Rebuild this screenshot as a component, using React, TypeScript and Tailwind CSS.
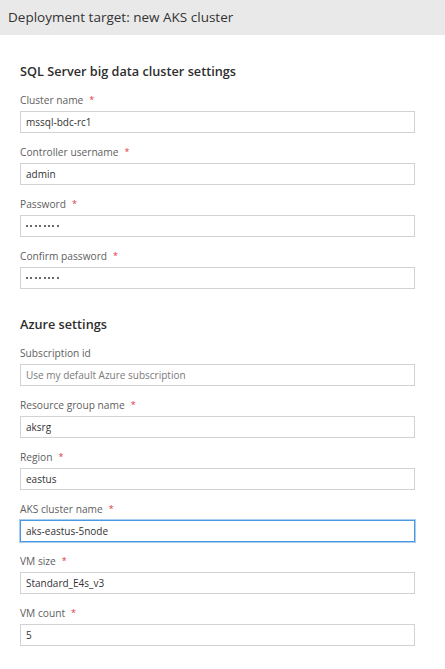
const font = { fontFamily: '"Open Sans", "Noto Sans", sans-serif' };

type Field = { label: string; value?: string; placeholder?: string; required?: boolean; secret?: boolean; focused?: boolean };

const bdcFields: Field[] = [
  { label: "Cluster name", value: "mssql-bdc-rc1", required: true },
  { label: "Controller username", value: "admin", required: true },
  { label: "Password", value: "********", required: true, secret: true },
  { label: "Confirm password", value: "********", required: true, secret: true },
];

const azureFields: Field[] = [
  { label: "Subscription id", placeholder: "Use my default Azure subscription" },
  { label: "Resource group name", value: "aksrg", required: true },
  { label: "Region", value: "eastus", required: true },
  { label: "AKS cluster name", value: "aks-eastus-5node", required: true, focused: true },
  { label: "VM size", value: "Standard_E4s_v3", required: true },
  { label: "VM count", value: "5", required: true },
];

function SecretDots({ count }: { count: number }) {
  return (
    <div className="flex items-center gap-[2.4px]">
      {Array.from({ length: count }).map((_, i) => (
        <span key={i} className="h-[2px] w-[2px] rounded-full bg-[#3a3a3a]" />
      ))}
    </div>
  );
}

function FormField({ field }: { field: Field }) {
  return (
    <div className="mt-[11px]">
      <div className="mb-[3px] flex h-4 items-center text-[10.2px] leading-4 text-[#606060]">
        {field.label}
        {field.required && <span className="ml-[6px] text-[9px] text-[#e0393e]">*</span>}
      </div>
      <div
        className={[
          "flex h-[22px] w-[395px] items-center px-[5px] text-[10px]",
          field.focused ? "border border-[#4a9ae2] shadow-[0_0_0_1px_#a9cdf0]" : "border border-[#d2d2d2]",
          field.placeholder ? "text-[#7a7a7a]" : "text-[#333333]",
        ].join(" ")}
      >
        {field.secret ? <SecretDots count={field.value?.length ?? 0} /> : field.value ?? field.placeholder}
      </div>
    </div>
  );
}

function Section({ title, fields, className }: { title: string; fields: Field[]; className?: string }) {
  return (
    <section className={className}>
      <h2 className="h-5 text-[12.7px] font-semibold leading-5 text-[#2e2e2e]">{title}</h2>
      {fields.map((f) => (
        <FormField key={f.label} field={f} />
      ))}
    </section>
  );
}

export default function App() {
  return (
    <div className="h-[669px] w-[445px] overflow-hidden bg-white" style={font}>
      <header className="flex h-[35px] items-center bg-[#e9e9e9] px-2 text-[13.5px] text-[#333333]">
        Deployment target: new AKS cluster
      </header>
      <div className="px-5 pt-[26px]">
        <Section title="SQL Server big data cluster settings" fields={bdcFields} />
        <Section title="Azure settings" fields={azureFields} className="mt-[25px]" />
      </div>
    </div>
  );
}
